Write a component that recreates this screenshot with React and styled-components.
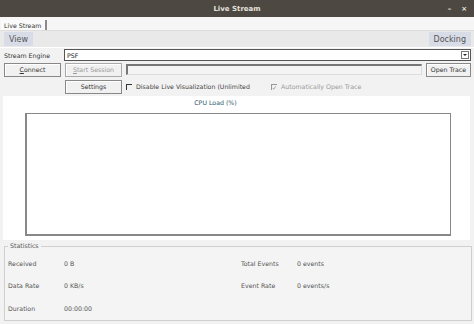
import React from "react";
import styled, { createGlobalStyle } from "styled-components";

const Global = createGlobalStyle`
  html, body { margin: 0; padding: 0; background: #f2f2f2; }
  body { font-family: "DejaVu Sans", "Liberation Sans", sans-serif; font-size: 6.25px; color: #444; }
  * { box-sizing: border-box; }
`;

const Window = styled.div`
  width: 474px;
  height: 324px;
  display: flex;
  flex-direction: column;
  background: #f2f2f2;
  overflow: hidden;
`;

const TitleBar = styled.div`
  flex-shrink: 0;
  height: 17px;
  background: #4e4843;
  color: #e4e0da;
  display: flex;
  align-items: center;
  justify-content: center;
  position: relative;
  font-weight: bold;
  font-size: 7px;
`;

const WinButtons = styled.div`
  position: absolute;
  right: 7px;
  top: 0;
  height: 17px;
  display: flex;
  align-items: center;
  gap: 10px;
  color: #e8e4de;
  font-size: 7px;
  font-weight: bold;
`;

const TabBar = styled.div`
  flex-shrink: 0;
  height: 14px;
  background: #f6f6f6;
  display: flex;
  align-items: stretch;
  border-bottom: 1px solid #ddd;
  padding-top: 3px;
`;

const Tab = styled.div`
  padding: 0 4px 0 3px;
  display: flex;
  align-items: center;
  color: #333;
  background: #fafafa;
  border-right: 2px solid #8a8a8a;
  margin-left: 1px;
`;

const Toolbar = styled.div`
  flex-shrink: 0;
  height: 17px;
  background: #e9e9e9;
  display: flex;
  justify-content: space-between;
  align-items: center;
  padding: 0 3px 0 4px;
  border-bottom: 1px solid #fff;
`;

const ToolButton = styled.div`
  background: #d8dce6;
  color: #555;
  font-size: 8px;
  height: 14px;
  padding: 0 5px;
  display: flex;
  align-items: center;
`;

const Content = styled.div`
  flex: 1;
  min-height: 0;
  display: flex;
  flex-direction: column;
  padding: 1px 3px 3px 3px;
`;

const Row = styled.div`
  flex-shrink: 0;
  display: flex;
  align-items: center;
  gap: ${p => p.$gap ?? 4}px;
  height: ${p => p.$h}px;
  padding-left: ${p => p.$pl ?? 0}px;
`;

const Label = styled.div`
  width: 57px;
  padding-left: 1px;
  color: #333;
`;

const Combo = styled.div`
  flex: 1;
  height: 12px;
  background: #fff;
  border: 1px solid #555;
  display: flex;
  align-items: center;
  justify-content: space-between;
  padding: 0 1px 0 2px;
  color: #222;
`;

const Arrow = styled.div`
  width: 8px;
  height: 8px;
  border: 1px solid #777;
  display: flex;
  align-items: center;
  justify-content: center;
  &::after {
    content: "";
    border-left: 2px solid transparent;
    border-right: 2px solid transparent;
    border-top: 2px solid #222;
  }
`;

const Button = styled.div`
  width: ${p => p.$w}px;
  height: 14px;
  background: #f1f1f1;
  border: 1px solid ${p => (p.$disabled ? "#aaa" : "#888")};
  box-shadow: inset 1px 1px 0 #fff;
  color: ${p => (p.$disabled ? "#999" : "#333")};
  display: flex;
  align-items: center;
  justify-content: center;
  white-space: nowrap;
  u { text-decoration: underline; }
`;

const TextField = styled.div`
  flex: 1;
  height: 11px;
  background: #f4f4f4;
  border-top: 2px solid #777;
  border-left: 2px solid #777;
  border-bottom: 1px solid #ddd;
  border-right: 1px solid #ddd;
`;

const Check = styled.label`
  display: flex;
  align-items: center;
  gap: 4px;
  white-space: nowrap;
  width: ${p => (p.$w ? `${p.$w}px` : "auto")};
  color: ${p => (p.$disabled ? "#999" : "#444")};
`;

const Box = styled.span`
  width: 6px;
  height: 6px;
  border-top: 1px solid ${p => (p.$disabled ? "#999" : "#333")};
  border-left: 1px solid ${p => (p.$disabled ? "#999" : "#333")};
  font-size: 6px;
  line-height: 6px;
  color: #888;
`;

const ChartPanel = styled.div`
  flex-shrink: 0;
  margin-top: 1px;
  height: 144px;
  background: #fff;
  margin-right: 1px;
  display: flex;
  flex-direction: column;
  align-items: center;
`;

const ChartTitle = styled.div`
  color: #2d5a6a;
  margin-top: 2px;
  margin-right: 42px;
  height: 9px;
  line-height: 9px;
`;

const Plot = styled.div`
  margin-top: 6px;
  margin-left: 2px;
  width: 426px;
  height: 123px;
  border: 1px solid #888;
  border-left-width: 2px;
  border-bottom-width: 2px;
  background: #fff;
`;

const Group = styled.div`
  margin: 6px 0 0 1px;
  width: 468px;
  flex: 1;
  border: 1px solid #cfcfcf;
  background: #f4f4f4;
  position: relative;
  display: flex;
  flex-direction: column;
  padding: 5px 0 0 3px;
`;

const Legend = styled.span`
  position: absolute;
  top: -6px;
  left: 3px;
  padding: 0 2px;
  color: #555;
  background: #f2f2f2;
  line-height: 9px;
`;

const StatRow = styled.div`
  display: grid;
  grid-template-columns: 56px 177px 56px 100px;
  align-items: center;
  height: 22.5px;
  color: #555;
`;

const Cell = styled.span`
  white-space: nowrap;
`;

const stats = [
  ["Received", "0 B", "Total Events", "0 events"],
  ["Data Rate", "0 KB/s", "Event Rate", "0 events/s"],
  ["Duration", "00:00:00", "", ""],
];

export default function App() {
  return (
    <Window>
      <Global />
      <TitleBar>
        Live Stream
        <WinButtons>
          <span>–</span>
          <span>×</span>
        </WinButtons>
      </TitleBar>
      <TabBar>
        <Tab>Live Stream</Tab>
      </TabBar>
      <Toolbar>
        <ToolButton>View</ToolButton>
        <ToolButton>Docking</ToolButton>
      </Toolbar>
      <Content>
        <Row $h={12}>
          <Label>Stream Engine</Label>
          <Combo>
            PSF
            <Arrow />
          </Combo>
        </Row>
        <Row $h={17} $pl={1}>
          <Button $w={57}><span><u>C</u>onnect</span></Button>
          <Button $w={57} $disabled><span><u>S</u>tart Session</span></Button>
          <TextField />
          <Button $w={45}>Open Trace</Button>
        </Row>
        <Row $h={17} $pl={62} $gap={4}>
          <Button $w={57}>Settings</Button>
          <Check $w={141}><Box />Disable Live Visualization (Unlimited</Check>
          <Check $disabled><Box $disabled>✓</Box>Automatically Open Trace</Check>
        </Row>
        <ChartPanel>
          <ChartTitle>CPU Load (%)</ChartTitle>
          <Plot />
        </ChartPanel>
        <Group>
          <Legend>Statistics</Legend>
          {stats.map((r, i) => (
            <StatRow key={i}>
              {r.map((t, j) => (
                <Cell key={j}>{t}</Cell>
              ))}
            </StatRow>
          ))}
        </Group>
      </Content>
    </Window>
  );
}
